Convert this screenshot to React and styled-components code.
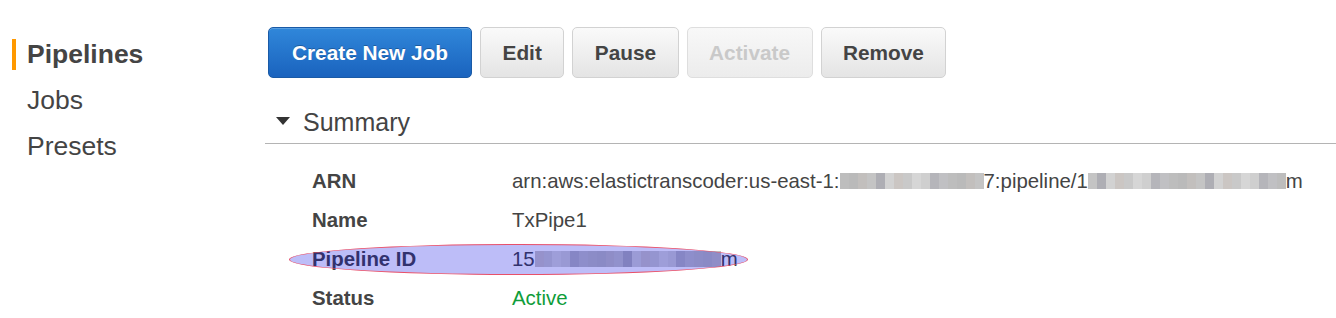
import React from 'react';
import styled, { createGlobalStyle } from 'styled-components';

const GlobalStyle = createGlobalStyle`
    body {
        margin: 0;
        background: #fff;
        font-family: "Liberation Sans", Arial, sans-serif;
        color: #444;
    }
`;

const Page = styled.div`
    display: flex;
    width: 1336px;
    height: 318px;
    overflow: hidden;
`;

const Sidebar = styled.nav`
    width: 265px;
    flex-shrink: 0;
    padding-top: 31px;
`;

const NavItem = styled.div`
    display: flex;
    align-items: center;
    height: 46px;
    font-size: 26.5px;
    font-weight: ${(p) => (p.$active ? 700 : 400)};
    color: #444;
`;

const Marker = styled.span`
    width: 4px;
    height: 31px;
    margin-left: 12px;
    margin-right: 11px;
    background: ${(p) => (p.$active ? '#ff9900' : 'transparent')};
`;

const Main = styled.main`
    flex: 1;
    padding-top: 27px;
`;

const Toolbar = styled.div`
    display: flex;
    gap: 8px;
    margin-left: 3px;
`;

const Button = styled.button`
    height: 51px;
    padding: 0 ${(p) => (p.$primary ? '23px' : '21.5px')};
    border-radius: 5px;
    font-family: inherit;
    font-size: 20.8px;
    font-weight: 700;
    cursor: pointer;
    border: 1px solid ${(p) => (p.$primary ? '#1a5aa6' : p.disabled ? '#dedede' : '#d2d2d2')};
    color: ${(p) => (p.$primary ? '#fff' : p.disabled ? '#c9c9c9' : '#444')};
    background: ${(p) =>
        p.$primary
            ? 'linear-gradient(#3087da, #1a63be)'
            : p.disabled
            ? 'linear-gradient(#f8f8f8, #ececec)'
            : 'linear-gradient(#fafafa, #e4e4e4)'};
    text-shadow: ${(p) => (p.$primary ? '0 -1px 0 rgba(0,0,0,0.25)' : 'none')};
    box-shadow: ${(p) => (p.$primary ? 'inset 0 1px 0 rgba(255,255,255,0.2)' : 'none')};
`;

const SectionHeader = styled.div`
    display: flex;
    align-items: center;
    height: 42px;
    margin-top: 23px;
    padding-left: 11px;
    border-bottom: 1px solid #b4b4b4;
    font-size: 25px;
    color: #444;
`;

const Caret = styled.span`
    width: 0;
    height: 0;
    margin-right: 13px;
    margin-top: -2px;
    border-left: 7.5px solid transparent;
    border-right: 7.5px solid transparent;
    border-top: 8px solid #333;
`;

const Details = styled.div`
    margin-top: 18px;
    padding-left: 47px;
`;

const Row = styled.div`
    position: relative;
    display: grid;
    grid-template-columns: 200px 1fr;
    align-items: center;
    height: 39px;
    font-size: 20.4px;
    white-space: nowrap;
`;

const Label = styled.div`
    font-weight: 700;
    color: #444;
`;

const Value = styled.div`
    color: ${(p) => (p.$status ? '#0f9d3a' : '#444')};
`;

const BlurBox = styled.span`
    display: inline-flex;
    height: 16px;
    vertical-align: -1px;
`;

const Pixel = styled.span`
    flex: 1;
    height: 100%;
`;

const Highlight = styled.div`
    position: absolute;
    left: -23px;
    top: 4px;
    width: 459px;
    height: 31px;
    border-radius: 50%;
    border: 1px solid #e8506a;
    box-sizing: border-box;
    background: rgba(0, 0, 228, 0.26);
    pointer-events: none;
`;

const tones = ['#c9c9c9', '#bdbdbd', '#d2d2d2', '#b5b5ba', '#c4c4c4', '#d6d6d6', '#bababa', '#cbc6c3', '#c0c0c3', '#aeaeb4', '#cfcfcf', '#c2bfbd'];

function Blur({ width, seed = 0 }) {
    const count = Math.round(width / 9);
    const cells = Array.from({ length: count }, (_, i) => tones[(i * 5 + seed) % tones.length]);
    return (
        <BlurBox style={{ width }}>
            {cells.map((c, i) => (
                <Pixel key={i} style={{ background: c }} />
            ))}
        </BlurBox>
    );
}

export default function App() {
    return (
        <>
            <GlobalStyle />
            <Page>
                <Sidebar>
                    <NavItem $active><Marker $active />Pipelines</NavItem>
                    <NavItem><Marker />Jobs</NavItem>
                    <NavItem><Marker />Presets</NavItem>
                </Sidebar>
                <Main>
                    <Toolbar>
                        <Button $primary>Create New Job</Button>
                        <Button>Edit</Button>
                        <Button>Pause</Button>
                        <Button disabled>Activate</Button>
                        <Button>Remove</Button>
                    </Toolbar>
                    <SectionHeader>
                        <Caret />
                        Summary
                    </SectionHeader>
                    <Details>
                        <Row>
                            <Label>ARN</Label>
                            <Value>
                                arn:aws:elastictranscoder:us-east-1:<Blur width={144} seed={1} />7:pipeline/1<Blur width={198} seed={4} />m
                            </Value>
                        </Row>
                        <Row>
                            <Label>Name</Label>
                            <Value>TxPipe1</Value>
                        </Row>
                        <Row>
                            <Label>Pipeline ID</Label>
                            <Value>
                                15<Blur width={186} seed={7} />m
                            </Value>
                            <Highlight />
                        </Row>
                        <Row>
                            <Label>Status</Label>
                            <Value $status>Active</Value>
                        </Row>
                    </Details>
                </Main>
            </Page>
        </>
    );
}
